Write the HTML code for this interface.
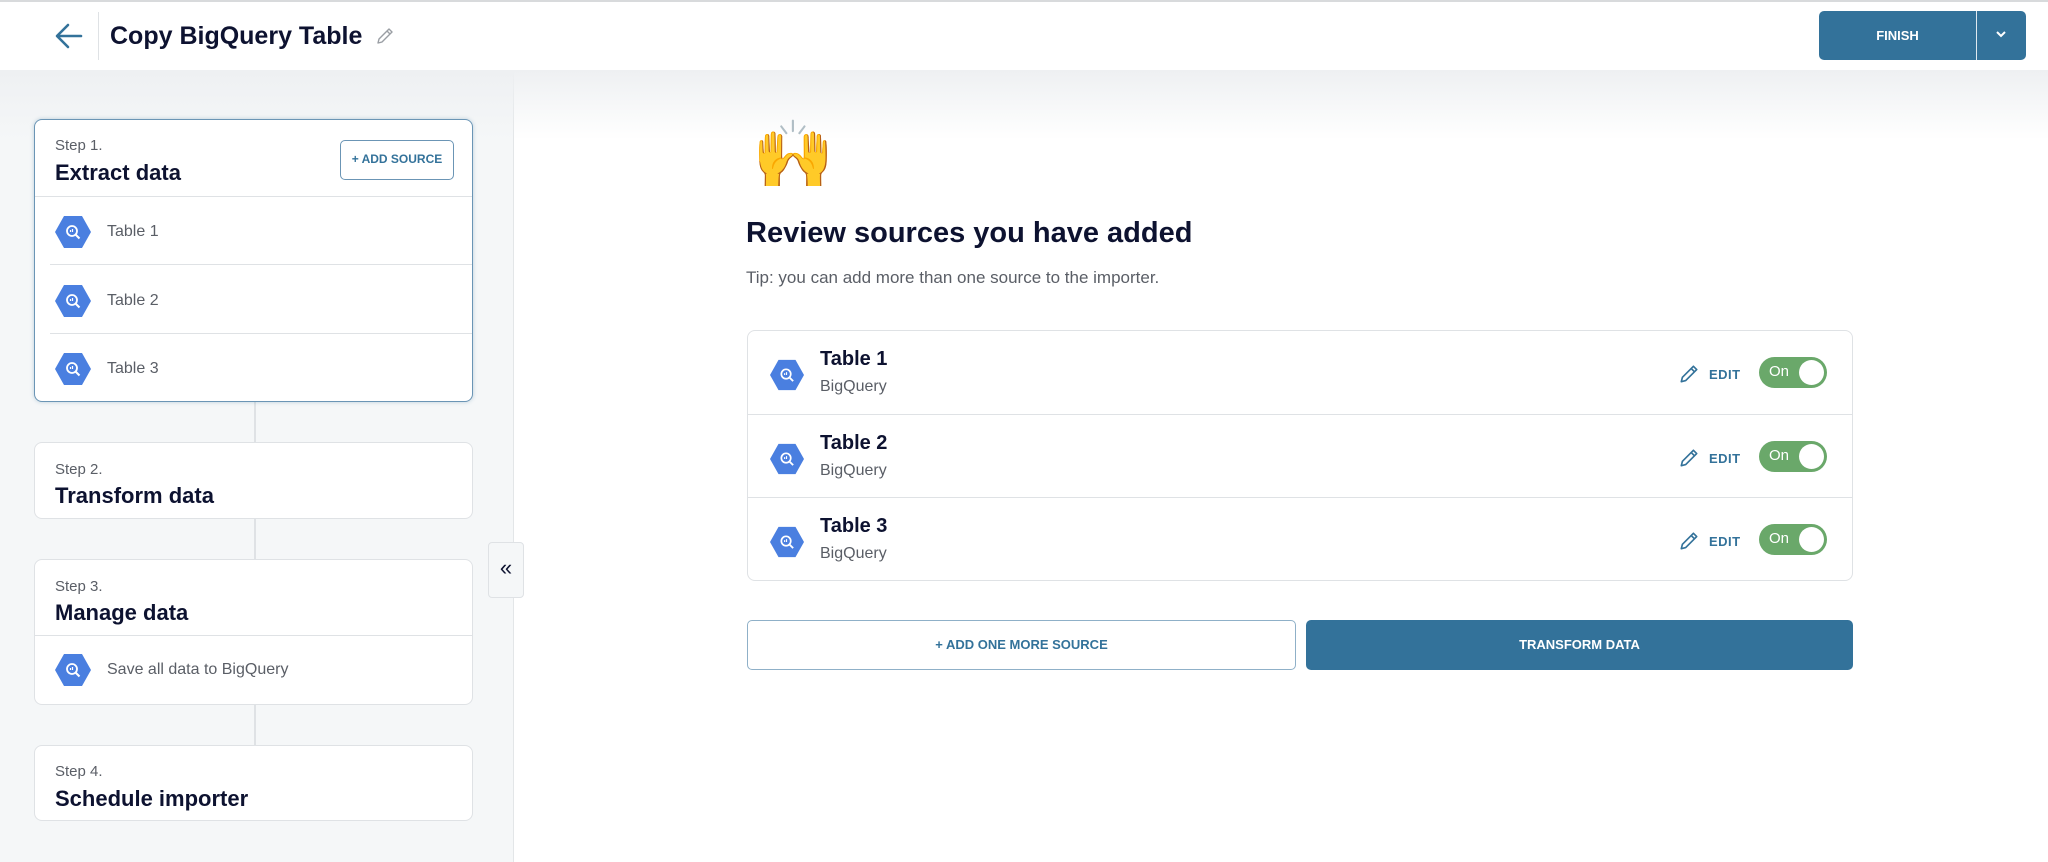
<!DOCTYPE html>
<html><head><meta charset="utf-8"><style>
*{box-sizing:border-box;margin:0;padding:0}
body{width:2048px;height:862px;overflow:hidden;background:#fff;font-family:"Liberation Sans",sans-serif;position:relative;color:#0d1230}
.abs{position:absolute}
.top{left:0;top:0;width:2048px;height:2px;background:#d8dadc}
.side{left:0;top:70px;width:514px;height:792px;background:#f5f7f8;border-right:1px solid #e3e6e8}
.shade{left:0;top:70px;width:2048px;height:70px;background:linear-gradient(#eef0f2,rgba(255,255,255,0))}
.card{position:absolute;left:34px;width:439px;background:#fff;border:1px solid #dfe2e5;border-radius:8px}
.step{position:absolute;left:20px;font-size:15px;color:#5a5e66}
.ttl{position:absolute;left:20px;font-size:22px;font-weight:bold;color:#0d1230}
.row{position:absolute;left:15px;right:0;height:1px;background:#dfe2e5}
.ri{position:absolute;left:20px;display:flex;align-items:center;font-size:16px;color:#5a5e66}
.ri svg{margin-right:16px}
.vl{position:absolute;left:254px;width:2px;background:#dfe2e5}
.lrow{position:absolute;left:0;right:0;height:83px}
.lrow .nm{position:absolute;left:72px;top:17px;font-size:20px;font-weight:bold;color:#0d1230}
.lrow .sb{position:absolute;left:72px;top:47px;font-size:16px;color:#5a5e66}
.lrow .hx{position:absolute;left:22px;top:27px}
.ed{position:absolute;left:930px;top:32px;display:flex;align-items:center;font-size:13px;font-weight:bold;color:#33729a;letter-spacing:.5px}
.tg{position:absolute;left:1011px;top:26px;width:68px;height:31px;border-radius:16px;background:#6aa86a;color:#fff;font-size:15px;padding:6px 0 0 10px}
.tg i{position:absolute;right:3px;top:3px;width:25px;height:25px;border-radius:50%;background:#fff}
</style></head><body>
<div class="abs top"></div>
<svg class="abs" style="left:54px;top:22px" width="30" height="28" viewBox="0 0 30 28"><path d="M27 14H4M14 3L3 14l11 11" stroke="#33729a" stroke-width="2.6" fill="none" stroke-linecap="round" stroke-linejoin="round"/></svg>
<div class="abs" style="left:98px;top:12px;width:1px;height:48px;background:#dfe2e5"></div>
<div class="abs" style="left:110px;top:22px;font-size:25px;font-weight:bold">Copy BigQuery Table</div>
<svg class="abs" style="left:375px;top:26px" width="20" height="20" viewBox="0 0 20 20"><path d="M3 17l1-4L14 3l3 3L7 16zM12 5l3 3" stroke="#9a9ea4" stroke-width="1.4" fill="none" stroke-linejoin="round"/></svg>
<div class="abs" style="left:1819px;top:11px;width:207px;height:49px;background:#33729a;border-radius:5px"></div>
<div class="abs" style="left:1976px;top:11px;width:1px;height:49px;background:#dfe9f0"></div>
<div class="abs" style="left:1819px;top:28px;width:157px;text-align:center;color:#fff;font-size:13px;font-weight:bold">FINISH</div>
<svg class="abs" style="left:1994px;top:29px" width="14" height="10" viewBox="0 0 14 10"><path d="M3 3l4 4 4-4" stroke="#fff" stroke-width="2" fill="none"/></svg>

<div class="abs side"></div>
<div class="abs shade"></div>

<div class="vl" style="top:402px;height:40px"></div>
<div class="vl" style="top:519px;height:40px"></div>
<div class="vl" style="top:705px;height:40px"></div>

<svg width="0" height="0" style="position:absolute"><defs><g id="hx"><path d="M9 2h18l9 16-9 16H9L0 18z" fill="#4a7fe0"/><circle cx="17" cy="17" r="5" fill="none" stroke="#fff" stroke-width="1.8"/><path d="M20.5 20.5l4 4" stroke="#fff" stroke-width="2"/><path d="M15.5 18v-2M17.5 18v-3" stroke="#fff" stroke-width="1.2"/></g></defs></svg>

<div class="card" style="top:119px;height:283px;border:1.5px solid #6b95b5;box-shadow:0 0 4px rgba(51,114,154,.3)">
 <div class="step" style="top:17px">Step 1.</div>
 <div class="ttl" style="top:40px">Extract data</div>
 <div class="abs" style="left:305px;top:20px;width:114px;height:40px;border:1.5px solid #6b95b5;border-radius:5px;color:#33729a;font-size:12px;font-weight:bold;text-align:center;line-height:37px">+ ADD SOURCE</div>
 <div class="row" style="top:76px;left:0"></div>
 <div class="ri" style="top:94px"><svg width="36" height="36" viewBox="0 0 36 36"><use href="#hx"/></svg>Table 1</div>
 <div class="row" style="top:144px"></div>
 <div class="ri" style="top:163px"><svg width="36" height="36" viewBox="0 0 36 36"><use href="#hx"/></svg>Table 2</div>
 <div class="row" style="top:213px"></div>
 <div class="ri" style="top:231px"><svg width="36" height="36" viewBox="0 0 36 36"><use href="#hx"/></svg>Table 3</div>
</div>
<div class="card" style="top:442px;height:77px">
 <div class="step" style="top:18px">Step 2.</div>
 <div class="ttl" style="top:40px">Transform data</div>
</div>
<div class="card" style="top:559px;height:146px">
 <div class="step" style="top:18px">Step 3.</div>
 <div class="ttl" style="top:40px">Manage data</div>
 <div class="row" style="top:75px;left:0"></div>
 <div class="ri" style="top:92px"><svg width="36" height="36" viewBox="0 0 36 36"><use href="#hx"/></svg>Save all data to BigQuery</div>
</div>
<div class="card" style="top:745px;height:76px">
 <div class="step" style="top:17px">Step 4.</div>
 <div class="ttl" style="top:40px">Schedule importer</div>
</div>
<div class="abs" style="left:488px;top:542px;width:36px;height:56px;background:#f5f7f8;border:1px solid #dfe2e5;border-radius:4px;text-align:center;line-height:50px;font-size:22px;color:#0d1230">«</div>

<div class="abs" style="left:752px;top:116px;font-size:66px;line-height:80px;font-family:'Noto Color Emoji',sans-serif">🙌</div>
<div class="abs" style="left:746px;top:217px;font-size:29px;font-weight:bold">Review sources you have added</div>
<div class="abs" style="left:746px;top:268px;font-size:17px;color:#5a5e66">Tip: you can add more than one source to the importer.</div>

<div class="abs" style="left:747px;top:330px;width:1106px;height:251px;border:1px solid #dfe2e5;border-radius:8px">
 <div class="lrow" style="top:0"><svg class="hx" width="34" height="34" viewBox="0 0 36 36"><use href="#hx"/></svg><div class="nm">Table 1</div><div class="sb">BigQuery</div>
  <div class="ed"><svg width="22" height="22" viewBox="0 0 20 20" style="margin-right:9px"><path d="M3 17l1-4L14 3l3 3L7 16zM12 5l3 3" stroke="#33729a" stroke-width="1.5" fill="none" stroke-linejoin="round"/></svg>EDIT</div><div class="tg">On<i></i></div></div>
 <div class="row" style="top:83px;left:0"></div>
 <div class="lrow" style="top:84px"><svg class="hx" width="34" height="34" viewBox="0 0 36 36"><use href="#hx"/></svg><div class="nm">Table 2</div><div class="sb">BigQuery</div>
  <div class="ed"><svg width="22" height="22" viewBox="0 0 20 20" style="margin-right:9px"><path d="M3 17l1-4L14 3l3 3L7 16zM12 5l3 3" stroke="#33729a" stroke-width="1.5" fill="none" stroke-linejoin="round"/></svg>EDIT</div><div class="tg">On<i></i></div></div>
 <div class="row" style="top:166px;left:0"></div>
 <div class="lrow" style="top:167px"><svg class="hx" width="34" height="34" viewBox="0 0 36 36"><use href="#hx"/></svg><div class="nm">Table 3</div><div class="sb">BigQuery</div>
  <div class="ed"><svg width="22" height="22" viewBox="0 0 20 20" style="margin-right:9px"><path d="M3 17l1-4L14 3l3 3L7 16zM12 5l3 3" stroke="#33729a" stroke-width="1.5" fill="none" stroke-linejoin="round"/></svg>EDIT</div><div class="tg">On<i></i></div></div>
</div>

<div class="abs" style="left:747px;top:620px;width:549px;height:50px;border:1.5px solid #8fb0c8;border-radius:5px;text-align:center;line-height:47px;font-size:13px;font-weight:bold;color:#33729a">+ ADD ONE MORE SOURCE</div>
<div class="abs" style="left:1306px;top:620px;width:547px;height:50px;background:#33729a;border-radius:5px;text-align:center;line-height:50px;font-size:13px;font-weight:bold;color:#fff">TRANSFORM DATA</div>
</body></html>
